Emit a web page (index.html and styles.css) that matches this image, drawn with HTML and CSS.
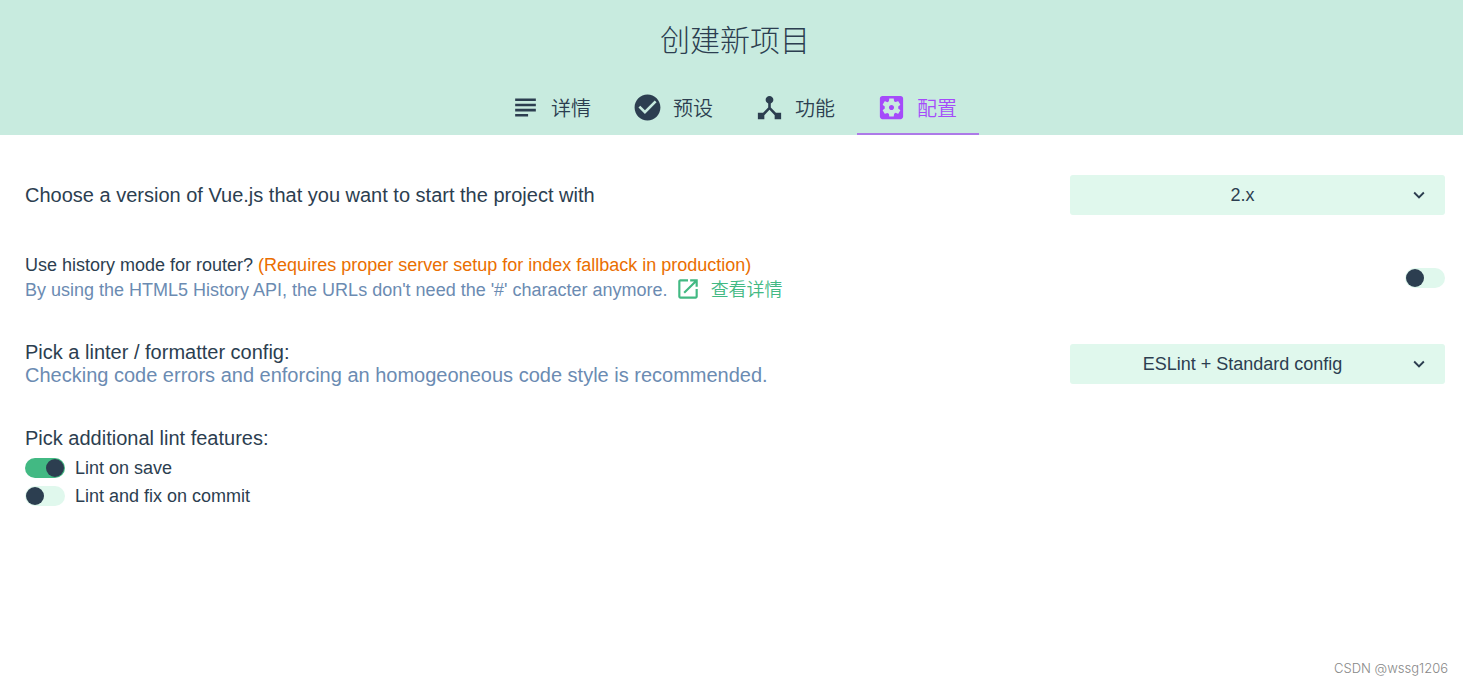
FILE: index.html
```
<!DOCTYPE html>
<html lang="zh-CN">
<head>
  <meta charset="UTF-8" />
  <meta name="viewport" content="width=device-width, initial-scale=1.0"/>
  <title>创建新项目</title>
  <link rel="stylesheet" href="styles.css">
</head>
<body>
  <header class="header">
    <h1>创建新项目</h1>
    <nav class="tabs">
      <a class="tab" href="#details">
        <svg viewBox="0 0 24 24"><path d="M14 17H4v2h10v-2zm6-8H4v2h16V9zM4 15h16v-2H4v2zM4 5v2h16V5H4z"/></svg>
        <span>详情</span>
      </a>
      <a class="tab" href="#presets">
        <svg viewBox="0 0 24 24"><path d="M12 2C6.48 2 2 6.48 2 12s4.480 10 10 10 10-4.480 10-10S17.520 2 12 2zm-2 15l-5-5 1.410-1.410L10 14.170l7.590-7.590L19 8l-9 9z"/></svg>
        <span>预设</span>
      </a>
      <a class="tab" href="#features">
        <svg viewBox="0 0 24 24"><path d="M17 16l-4-4V8.820C14.160 8.400 15 7.300 15 6c0-1.660-1.340-3-3-3S9 4.340 9 6c0 1.300.84 2.400 2 2.820V12l-4 4H3v5h5v-3.050l4-4.200 4 4.200V21h5v-5h-4z"/></svg>
        <span>功能</span>
      </a>
      <a class="tab active" href="#config">
        <svg viewBox="0 0 24 24"><path d="M12 10c-1.100 0-2 .9-2 2s.9 2 2 2 2-.9 2-2-.9-2-2-2zm7-7H5c-1.110 0-2 .9-2 2v14c0 1.100.89 2 2 2h14c1.110 0 2-.9 2-2V5c0-1.100-.89-2-2-2zm-1.750 9c0 .23-.02.46-.05.68l1.480 1.160c.13.11.17.3.08.45l-1.400 2.420c-.09.15-.27.21-.43.15l-1.740-.7c-.36.28-.76.51-1.180.69l-.26 1.850c-.03.17-.18.3-.35.3h-2.800c-.17 0-.32-.13-.35-.29l-.26-1.850c-.43-.18-.82-.41-1.180-.69l-1.740.7c-.16.06-.34 0-.43-.15l-1.400-2.420c-.09-.15-.05-.34.08-.45l1.480-1.160c-.03-.23-.05-.46-.05-.69s.02-.46.05-.68l-1.480-1.160c-.13-.11-.17-.3-.08-.45l1.400-2.420c.09-.15.27-.21.43-.15l1.740.7c.36-.28.76-.51 1.180-.69l.26-1.850c.03-.17.18-.3.35-.3h2.800c.17 0 .32.13.35.29l.26 1.850c.43.18.82.41 1.180.69l1.740-.7c.16-.06.34 0 .43.15l1.400 2.420c.09.15.05.34-.08.45l-1.480 1.160c.03.23.05.46.05.69z"/></svg>
        <span>配置</span>
      </a>
    </nav>
  </header>

  <main class="content">
    <div class="prompt">
      <label class="title" for="version">Choose a version of Vue.js that you want to start the project with</label>
      <div class="select">
        <select id="version">
          <option>2.x</option>
          <option>3.x</option>
        </select>
        <svg viewBox="0 0 24 24"><path d="M7.410 8.590L12 13.170l4.590-4.580L18 10l-6 6-6-6z"/></svg>
      </div>
    </div>

    <div class="prompt small">
      <div>
        <label for="history">Use history mode for router? <span class="warning">(Requires proper server setup for index fallback in production)</span></label>
        <div class="description">
          By using the HTML5 History API, the URLs don't need the '#' character anymore.
          <a class="more" href="#more">
            <svg viewBox="0 0 24 24"><path d="M19 19H5V5h7V3H5c-1.110 0-2 .9-2 2v14c0 1.100.89 2 2 2h14c1.100 0 2-.9 2-2v-7h-2v7zM14 3v2h3.590l-9.830 9.830 1.410 1.410L19 6.410V10h2V3h-7z"/></svg>
            <span>查看详情</span>
          </a>
        </div>
      </div>
      <input type="checkbox" class="switch" id="history">
    </div>

    <div class="prompt">
      <div>
        <label class="title" for="linter">Pick a linter / formatter config:</label>
        <div class="description">Checking code errors and enforcing an homogeoneous code style is recommended.</div>
      </div>
      <div class="select">
        <select id="linter">
          <option>ESLint + Standard config</option>
          <option>ESLint + Airbnb config</option>
          <option>ESLint + Prettier</option>
        </select>
        <svg viewBox="0 0 24 24"><path d="M7.410 8.590L12 13.170l4.590-4.580L18 10l-6 6-6-6z"/></svg>
      </div>
    </div>

    <fieldset class="lint-features">
      <legend>Pick additional lint features:</legend>
      <label><input type="checkbox" class="switch" checked> Lint on save</label>
      <label><input type="checkbox" class="switch"> Lint and fix on commit</label>
    </fieldset>
  </main>

  <footer class="watermark">CSDN @wssg1206</footer>
</body>
</html>
```
FILE: styles.css
```
:root {
  --dark: #2c3e50;
  --green: #42b983;
  --light-green: #e0f8ed;
  --header-bg: #c8ebdf;
  --purple: #a54bfa;
  --blue: #6b8bb2;
  --orange: #ea6e00;
}

* {
  box-sizing: border-box;
}

body {
  margin: 0;
  min-height: 100vh;
  display: flex;
  flex-direction: column;
  font-family: "Liberation Sans", "Noto Sans CJK SC", sans-serif;
  font-size: 18px;
  color: var(--dark);
  background-color: #fff;
}

svg {
  fill: currentColor;
}

.header {
  background-color: var(--header-bg);
  padding-left: 7px;
}

h1 {
  margin: 0;
  height: 82px;
  line-height: 82px;
  text-align: center;
  font-size: 30px;
  font-weight: 300;
}

.tabs {
  display: flex;
  justify-content: center;
}

.tab {
  display: flex;
  align-items: center;
  gap: 10px;
  height: 53px;
  padding: 0 22px 0 19px;
  border-bottom: 2px solid transparent;
  font-size: 20px;
  font-weight: 350;
  color: var(--dark);
  text-decoration: none;
}

.tab svg {
  width: 31px;
  height: 31px;
}

.tab.active {
  color: var(--purple);
  border-bottom-color: #ad7ae8;
}

.content {
  flex: 1;
  display: flex;
  flex-direction: column;
  gap: 38px;
  padding: 40px 18px 20px 25px;
}

.prompt {
  display: flex;
  align-items: center;
  justify-content: space-between;
  font-size: 20px;
  line-height: 23px;
}

.prompt.small {
  font-size: 18px;
  line-height: 25px;
}

.warning {
  color: var(--orange);
}

.description {
  display: flex;
  color: var(--blue);
}

.more {
  display: flex;
  align-items: center;
  gap: 10px;
  height: 25px;
  margin-left: 7px;
  font-weight: 350;
  color: var(--green);
  text-decoration: none;
}

.more svg {
  width: 26px;
  height: 26px;
  margin-bottom: 4px;
}

.select {
  display: grid;
  align-items: center;
  width: 375px;
  height: 40px;
}

.select select {
  grid-area: 1 / 1;
  width: 100%;
  height: 40px;
  padding: 0 30px 0 0;
  border: none;
  border-radius: 3px;
  appearance: none;
  background-color: var(--light-green);
  color: var(--dark);
  font-family: inherit;
  font-size: 18px;
  text-align: center;
  text-align-last: center;
  cursor: pointer;
}

.select svg {
  grid-area: 1 / 1;
  justify-self: end;
  width: 22px;
  height: 22px;
  margin-right: 15px;
  pointer-events: none;
}

.switch {
  flex: none;
  width: 40px;
  height: 20px;
  margin: 0;
  padding: 1px;
  border-radius: 10px;
  appearance: none;
  background-color: var(--light-green);
  cursor: pointer;
}

.switch::before {
  content: "";
  display: block;
  width: 18px;
  height: 18px;
  border-radius: 50%;
  background-color: var(--dark);
}

.switch:checked {
  background-color: var(--green);
}

.switch:checked::before {
  margin-left: auto;
}

.lint-features {
  margin: 0;
  padding: 0;
  border: none;
}

.lint-features legend {
  margin-bottom: 2px;
  padding: 0;
  font-size: 20px;
  line-height: 27px;
}

.lint-features label {
  display: flex;
  align-items: center;
  gap: 10px;
  width: fit-content;
  height: 28px;
}

.watermark {
  padding: 0 15px 9px;
  text-align: right;
  font-family: Inter, sans-serif;
  font-size: 13px;
  font-weight: 300;
  line-height: 16px;
  color: #888;
}
```
